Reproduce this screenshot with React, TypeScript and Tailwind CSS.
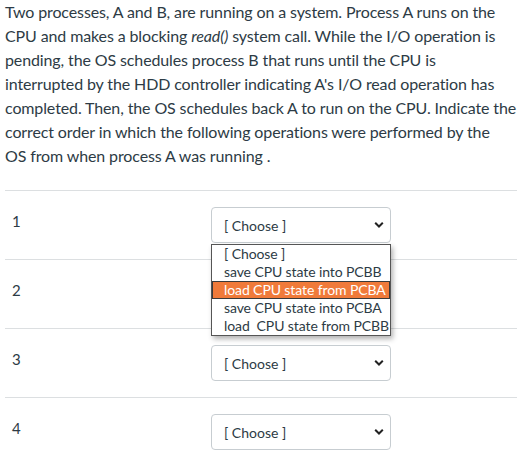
const OPTIONS = [
  '[ Choose ]',
  'save CPU state into PCBB',
  'load CPU state from PCBA',
  'save CPU state into PCBA',
  'load  CPU state from PCBB',
]

const Chevron = () => (
  <svg width="10" height="7" viewBox="0 0 10 7" className="pointer-events-none absolute right-[6px] top-1/2 -translate-y-1/2">
    <path d="M1.2 1.3 5 5 8.8 1.3" fill="none" stroke="#222" strokeWidth="2" />
  </svg>
)

const ChooseBox = ({ open = false }: { open?: boolean }) => (
  <div className="relative w-[180px]">
    <div className="relative flex h-[36px] items-center rounded-[4px] border border-[#c7cdd1] bg-white pl-[12px] text-[14px] text-[#2d3b45]">
      [ Choose ]
      <Chevron />
    </div>
    {open && (
      <ul className="absolute left-0 top-[37px] z-10 w-[180px] border border-[#555] bg-white text-[14px] leading-[18px] tracking-[-0.1px] text-[#2d3b45] shadow-[2px_3px_5px_rgba(0,0,0,0.3)]">
        {OPTIONS.map((opt, i) => (
          <li
            key={opt}
            className={
              i === 2
                ? 'whitespace-pre bg-[#f07a3a] pl-[12px] text-white shadow-[inset_0_0_0_1px_#3a3a3a]'
                : 'whitespace-pre pl-[12px]'
            }
          >
            {opt}
          </li>
        ))}
      </ul>
    )}
  </div>
)

function App() {
  return (
    <div className="min-h-screen bg-white px-[5px] font-['Lato',sans-serif] text-[#2d3b45]">
      <p className="whitespace-nowrap text-[16px] leading-[24px] tracking-[-0.12px]">
        Two processes, A and B, are running on a system. Process A runs on the
        <br />
        CPU and makes a blocking <em>read()</em> system call. While the I/O operation is
        <br />
        pending, the OS schedules process B that runs until the CPU is
        <br />
        interrupted by the HDD controller indicating A's I/O read operation has
        <br />
        completed. Then, the OS schedules back A to run on the CPU. Indicate the
        <br />
        correct order in which the following operations were performed by the
        <br />
        OS from when process A was running .
      </p>

      <div className="mt-[22px] w-[512px]">
        {[1, 2, 3, 4].map((n) => (
          <div key={n} className="flex h-[69px] border-t border-[#dcdfe1]">
            <div className="w-[206px] pl-[7px] pt-[18px] text-[15px] leading-[24px]">{n}</div>
            <div className="pt-[16px]">
              <ChooseBox open={n === 1} />
            </div>
          </div>
        ))}
      </div>
    </div>
  )
}

export default App
